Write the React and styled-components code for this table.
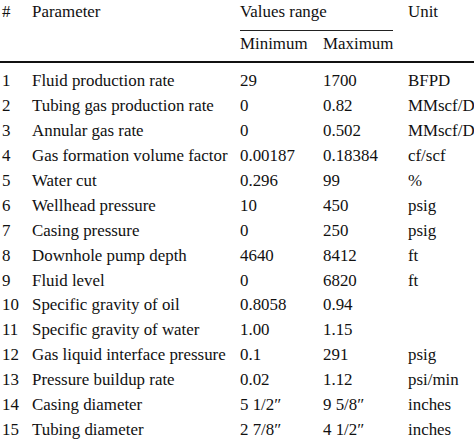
import React from 'react';
import styled, { createGlobalStyle } from 'styled-components';

const GlobalStyle = createGlobalStyle`
    html, body {
        margin: 0;
        padding: 0;
        background: #ffffff;
        overflow: hidden;
    }
`;

const rows = [
    ['1', 'Fluid production rate', '29', '1700', 'BFPD'],
    ['2', 'Tubing gas production rate', '0', '0.82', 'MMscf/D'],
    ['3', 'Annular gas rate', '0', '0.502', 'MMscf/D'],
    ['4', 'Gas formation volume factor', '0.00187', '0.18384', 'cf/scf'],
    ['5', 'Water cut', '0.296', '99', '%'],
    ['6', 'Wellhead pressure', '10', '450', 'psig'],
    ['7', 'Casing pressure', '0', '250', 'psig'],
    ['8', 'Downhole pump depth', '4640', '8412', 'ft'],
    ['9', 'Fluid level', '0', '6820', 'ft'],
    ['10', 'Specific gravity of oil', '0.8058', '0.94', ''],
    ['11', 'Specific gravity of water', '1.00', '1.15', ''],
    ['12', 'Gas liquid interface pressure', '0.1', '291', 'psig'],
    ['13', 'Pressure buildup rate', '0.02', '1.12', 'psi/min'],
    ['14', 'Casing diameter', '5 1/2\u2033', '9 5/8\u2033', 'inches'],
    ['15', 'Tubing diameter', '2 7/8\u2033', '4 1/2\u2033', 'inches'],
];

const COLS = '32px 208px 83px 85px auto';

const TableWrap = styled.div`
    width: 474px;
    overflow: hidden;
    font-family: "Liberation Serif", "Times New Roman", serif;
    font-size: 16.9px;
    color: #111;
`;

const Row = styled.div`
    display: grid;
    grid-template-columns: ${COLS};
    height: 24.9px;
    line-height: 24.9px;
    white-space: nowrap;
`;

const Cell = styled.div`
    padding-left: ${props => props.indent || 0}px;
    grid-column: ${props => props.span ? `span ${props.span}` : 'auto'};
`;

const RuleRow = styled.div`
    display: grid;
    grid-template-columns: ${COLS};
    margin-top: 5px;
`;

const RangeRule = styled.div`
    grid-column: 3 / span 2;
    height: 1px;
    background: #222;
    margin-right: 15px;
`;

const SubHead = styled(Row)`
    margin-top: 1px;
`;

const ThickRule = styled.div`
    height: 2px;
    background: #111;
    margin-top: 4.6px;
`;

const Body = styled.div`
    padding-top: 6px;
`;

export default function App() {
    return (
        <TableWrap>
            <GlobalStyle />
            <Row>
                <Cell indent={2}>#</Cell>
                <Cell>Parameter</Cell>
                <Cell span={2}>Values range</Cell>
                <Cell>Unit</Cell>
            </Row>
            <RuleRow>
                <RangeRule />
            </RuleRow>
            <SubHead>
                <Cell />
                <Cell />
                <Cell>Minimum</Cell>
                <Cell>Maximum</Cell>
                <Cell />
            </SubHead>
            <ThickRule />
            <Body>
                {rows.map((r) => (
                    <Row key={r[0]}>
                        <Cell indent={2}>{r[0]}</Cell>
                        <Cell>{r[1]}</Cell>
                        <Cell>{r[2]}</Cell>
                        <Cell>{r[3]}</Cell>
                        <Cell>{r[4]}</Cell>
                    </Row>
                ))}
            </Body>
        </TableWrap>
    );
}
